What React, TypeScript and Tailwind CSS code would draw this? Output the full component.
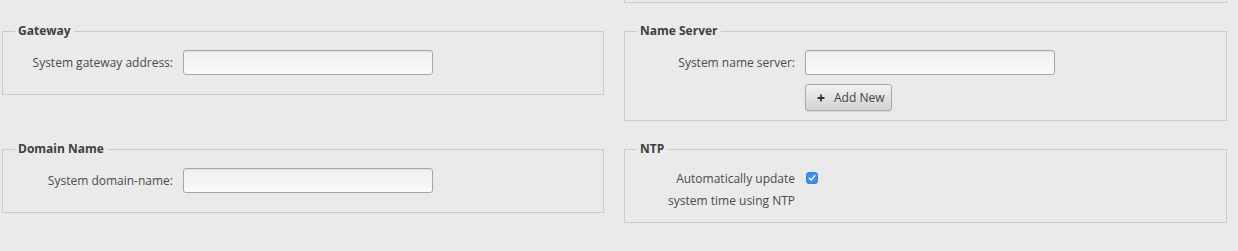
import React from "react";

const font = { fontFamily: '"Open Sans", "Liberation Sans", sans-serif' };

function Field({ legend, children, pb = "pb-[10px]" }: { legend: string; children: React.ReactNode; pb?: string }) {
  return (
    <fieldset className={`border border-[#cbcbcb] px-[12px] pt-[11px] m-0 ${pb}`}>
      <legend className="px-[3px] text-[12px] leading-[16px] font-bold text-[#404040]">{legend}</legend>
      {children}
    </fieldset>
  );
}

function Input() {
  return (
    <div className="w-[250px] h-[25px] rounded-[3px] border border-[#a6a6a6] bg-gradient-to-b from-[#f0f0f0] to-[#fafafa] shadow-[inset_0_1px_1px_rgba(0,0,0,0.06)]" />
  );
}

function Row({ label, children }: { label: string; children?: React.ReactNode }) {
  return (
    <div className="flex items-center mb-[9px]">
      <div className="w-[158px] text-right text-[12px] text-[#4a4a4a]">{label}</div>
      <div className="ml-[10px]">{children}</div>
    </div>
  );
}

export default function App() {
  return (
    <div className="w-[1238px] h-[251px] bg-[#eaeaea] overflow-hidden" style={font}>
      <div className="grid grid-cols-[602px_603px] gap-x-[20px] gap-y-[20px] pl-[2px] items-start">
        <div />
        <div className="h-[3px] border-x border-b border-[#cbcbcb]" />

        <Field legend="Gateway">
          <Row label="System gateway address:">
            <Input />
          </Row>
        </Field>

        <Field legend="Name Server" pb="pb-[9px]">
          <Row label="System name server:">
            <Input />
          </Row>
          <div className="flex">
            <div className="w-[158px]" />
            <button className="ml-[10px] w-[87px] h-[27px] rounded-[3px] border border-[#a9a9a9] bg-gradient-to-b from-[#f2f2f2] to-[#d3d3d3] flex items-center pl-[11px] text-[12px] text-[#444] shadow-[0_1px_1px_rgba(0,0,0,0.08)]">
              <svg width="8" height="8" viewBox="0 0 8 8" className="mr-[9px]">
                <path d="M4 0.5V7.5M0.5 4H7.5" stroke="#333" strokeWidth="1.8" />
              </svg>
              <span>Add New</span>
            </button>
          </div>
        </Field>

        <Field legend="Domain Name">
          <Row label="System domain-name:">
            <Input />
          </Row>
        </Field>

        <Field legend="NTP">
          <div className="flex items-start">
            <div className="w-[158px] text-right text-[12px] leading-[22px] text-[#4a4a4a]">
              Automatically update
              <br />
              system time using NTP
            </div>
            <div className="ml-[11px] mt-[4px] w-[12px] h-[12px] rounded-[3px] bg-[#3d8ef0] border border-[#3a7fd6] flex items-center justify-center">
              <svg width="8" height="8" viewBox="0 0 8 8">
                <path d="M1.3 4.3L3.2 6.1L6.8 1.6" fill="none" stroke="#fff" strokeWidth="1.4" strokeLinecap="round" strokeLinejoin="round" />
              </svg>
            </div>
          </div>
        </Field>
      </div>
    </div>
  );
}
